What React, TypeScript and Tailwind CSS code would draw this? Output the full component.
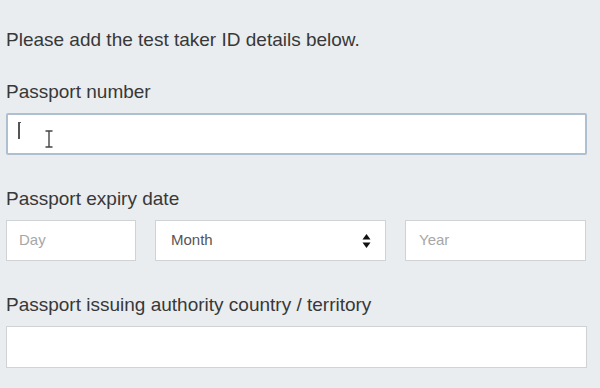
import React from 'react';

const SelectArrows: React.FC = () => (
  <svg width="9" height="16" viewBox="0 0 9 16" className="shrink-0">
    <path d="M4.5 1 L8.5 6.5 L0.5 6.5 Z" fill="#111" />
    <path d="M4.5 15 L8.5 9.5 L0.5 9.5 Z" fill="#111" />
  </svg>
);

const IBeam: React.FC = () => (
  <svg width="10" height="18" viewBox="0 0 10 18" className="absolute left-[36px] top-[15px]">
    <path d="M1.5 1 H8.5 M5 1 V17 M1.5 17 H8.5" stroke="#444" strokeWidth="1.4" fill="none" />
  </svg>
);

const App: React.FC = () => {
  return (
    <div
      className="w-[600px] h-[388px] overflow-hidden bg-[#e9edf0] pl-[6px] pr-[14px] pt-[28px] text-[#383838]"
      style={{ fontFamily: '"Liberation Sans", Arial, sans-serif' }}
    >
      <p className="text-[19px] leading-[24px]">Please add the test taker ID details below.</p>

      {/* Passport number */}
      <label className="block mt-[28px] text-[19px] leading-[24px]">Passport number</label>
      <div className="relative mt-[9px] h-[42px] w-[581px] bg-white border-2 border-[#aebfcf] rounded-[2px]">
        <span className="absolute left-[10px] top-[7px] w-[3px] h-[17px] border-l-[2px] border-t-[1.5px] border-[#555]" />
        <IBeam />
      </div>

      {/* Passport expiry date */}
      <label className="block mt-[32px] text-[19px] leading-[24px]">Passport expiry date</label>
      <div className="mt-[9px] flex items-center gap-[19px]">
        <div className="h-[41px] w-[130px] bg-white border border-[#cfd3d6] flex items-center pl-[12px] text-[15px] text-[#a7a7a7]">
          Day
        </div>
        <div className="h-[41px] w-[231px] bg-white border border-[#cfd3d6] flex items-center justify-between pl-[15px] pr-[14px] text-[15px] text-[#555]">
          <span>Month</span>
          <SelectArrows />
        </div>
        <div className="h-[41px] w-[181px] bg-white border border-[#cfd3d6] flex items-center pl-[13px] text-[15px] text-[#a7a7a7]">
          Year
        </div>
      </div>

      {/* Issuing authority */}
      <label className="block mt-[32px] text-[19px] leading-[24px]">Passport issuing authority country / territory</label>
      <div className="mt-[9px] h-[42px] w-[581px] bg-white border border-[#cfd3d6]" />
    </div>
  );
};

export default App;
